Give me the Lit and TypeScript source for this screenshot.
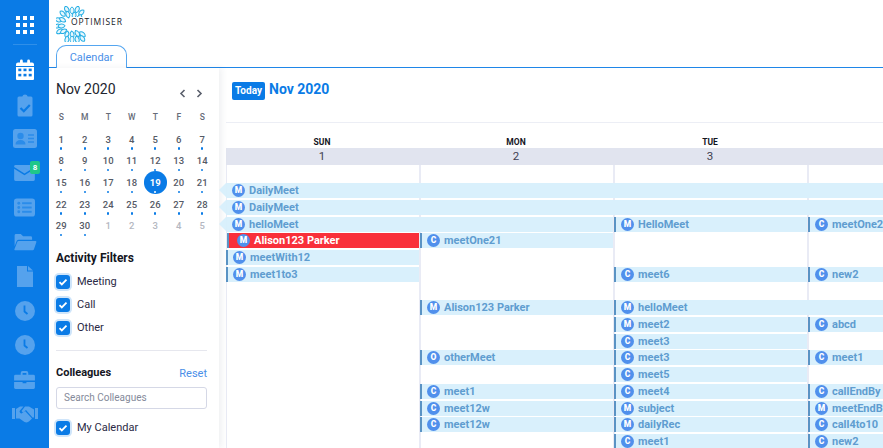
import { LitElement, html, css, svg } from "lit";
import { customElement } from "lit/decorators.js";

type Ev = { r: number; c: number; s?: number; k: string; t: string; cont?: boolean; red?: boolean };

const EVENTS: Ev[] = [
  { r: 0, c: 0, s: 4, k: "M", t: "DailyMeet", cont: true },
  { r: 1, c: 0, s: 4, k: "M", t: "DailyMeet", cont: true },
  { r: 2, c: 0, s: 2, k: "M", t: "helloMeet", cont: true },
  { r: 2, c: 2, k: "M", t: "HelloMeet" },
  { r: 2, c: 3, k: "C", t: "meetOne2" },
  { r: 3, c: 0, k: "M", t: "Alison123 Parker", red: true },
  { r: 3, c: 1, k: "C", t: "meetOne21" },
  { r: 4, c: 0, k: "M", t: "meetWith12" },
  { r: 5, c: 0, k: "M", t: "meet1to3" },
  { r: 5, c: 2, k: "C", t: "meet6" },
  { r: 5, c: 3, k: "C", t: "new2" },
  { r: 7, c: 1, k: "M", t: "Alison123 Parker" },
  { r: 7, c: 2, s: 2, k: "M", t: "helloMeet" },
  { r: 8, c: 2, k: "M", t: "meet2" },
  { r: 8, c: 3, k: "C", t: "abcd" },
  { r: 9, c: 2, k: "C", t: "meet3" },
  { r: 10, c: 1, k: "O", t: "otherMeet" },
  { r: 10, c: 2, k: "C", t: "meet3" },
  { r: 10, c: 3, k: "C", t: "meet1" },
  { r: 11, c: 2, k: "C", t: "meet5" },
  { r: 12, c: 1, k: "C", t: "meet1" },
  { r: 12, c: 2, k: "C", t: "meet4" },
  { r: 12, c: 3, k: "C", t: "callEndBy" },
  { r: 13, c: 1, k: "C", t: "meet12w" },
  { r: 13, c: 2, k: "M", t: "subject" },
  { r: 13, c: 3, k: "M", t: "meetEndBy" },
  { r: 14, c: 1, k: "C", t: "meet12w" },
  { r: 14, c: 2, k: "M", t: "dailyRec" },
  { r: 14, c: 3, k: "C", t: "call4to10" },
  { r: 15, c: 2, k: "C", t: "meet1" },
  { r: 15, c: 3, k: "C", t: "new2" },
];

const BLUE = "#0a7be6";
const DIM = "#55a2ed";
const CUT = "#2a8cea";

const navIcons = [
  svg`<svg width="24" height="24" viewBox="0 0 24 24"><path fill="#fff" d="M3 6.500a2 2 0 0 1 2-2h2V3a1.400 1.400 0 0 1 2.800 0v1.500h4.400V3A1.400 1.400 0 0 1 17 3v1.500h2a2 2 0 0 1 2 2V8H3zM3 9h18v12a1 1 0 0 1-1 1H4a1 1 0 0 1-1-1z"/><g fill="${BLUE}"><rect x="5.300" y="10.600" width="3" height="2.600"/><rect x="10.500" y="10.600" width="3" height="2.600"/><rect x="15.700" y="10.600" width="3" height="2.600"/><rect x="5.300" y="15.800" width="3" height="2.600"/><rect x="10.500" y="15.800" width="3" height="2.600"/><rect x="15.700" y="15.800" width="3" height="2.600"/></g></svg>`,
  svg`<svg width="24" height="24" viewBox="0 0 24 24"><path fill="${DIM}" d="M6 3.500h3.300a2.800 2.800 0 0 1 5.400 0H18a1.500 1.500 0 0 1 1.500 1.500v17a1.500 1.500 0 0 1-1.500 1.500H6A1.500 1.500 0 0 1 4.500 22V5A1.500 1.500 0 0 1 6 3.500z"/><path fill="none" stroke="${BLUE}" stroke-width="2.200" d="M7.500 15l3.300 3.300 6-6.300"/></svg>`,
  svg`<svg width="24" height="19" viewBox="0 0 24 19"><rect width="24" height="19" rx="2.500" fill="${DIM}"/><circle cx="7.500" cy="7" r="3.200" fill="${CUT}"/><path fill="${CUT}" d="M2.500 15.500c0-3 2-4.500 5-4.500s5 1.500 5 4.500z"/><path stroke="${CUT}" stroke-width="1.500" d="M15 6h6M15 9.500h6M15 13h6"/></svg>`,
  svg`<svg width="21" height="16" viewBox="0 0 22 17"><path fill="${DIM}" d="M1.500 0h19A1.500 1.500 0 0 1 22 1.500V2L11 9 0 2v-.5A1.500 1.500 0 0 1 1.500 0zM0 4l11 7 11-7v11.500a1.500 1.500 0 0 1-1.500 1.500h-19A1.500 1.500 0 0 1 0 15.500z"/></svg>`,
  svg`<svg width="21" height="19" viewBox="0 0 22 19"><rect width="22" height="19" rx="3" fill="${DIM}"/><g fill="${CUT}"><circle cx="5" cy="5" r="1.500"/><circle cx="5" cy="9.500" r="1.500"/><circle cx="5" cy="14" r="1.500"/><rect x="8.500" y="4" width="10" height="2"/><rect x="8.500" y="8.500" width="10" height="2"/><rect x="8.500" y="13" width="10" height="2"/></g></svg>`,
  svg`<svg width="24" height="17" viewBox="0 0 24 18"><path fill="${DIM}" d="M1 1.500A1.500 1.500 0 0 1 2.500 0h5l2.500 2.500h8A1.500 1.500 0 0 1 19.500 4v2H5.500a2.500 2.500 0 0 0-2.300 1.500L1 13z"/><path fill="${DIM}" d="M5.200 7.500H23a1 1 0 0 1 1 1.300l-2.500 7.400a1.500 1.500 0 0 1-1.400 1H1.500a.8.8 0 0 1-.7-1.100l3-7.500a1.500 1.500 0 0 1 1.400-1.100z"/></svg>`,
  svg`<svg width="16" height="21" viewBox="0 0 16 21"><path fill="${DIM}" d="M0 0h10v5.500h6V21H0z"/><path fill="${DIM}" d="M11 0l5 4.500h-5z"/></svg>`,
  svg`<svg width="20" height="20" viewBox="0 0 20 20"><circle cx="10" cy="10" r="10" fill="${DIM}"/><path fill="none" stroke="${BLUE}" stroke-width="1.800" d="M9.500 4.500V10.500l3 2.500"/></svg>`,
  svg`<svg width="20" height="20" viewBox="0 0 20 20"><circle cx="10" cy="10" r="10" fill="${DIM}"/><path fill="none" stroke="${BLUE}" stroke-width="1.800" d="M9.500 4.500V10.500l3 2.500"/></svg>`,
  svg`<svg width="21" height="18" viewBox="0 0 22 19"><path fill="${DIM}" d="M7 4V2a2 2 0 0 1 2-2h4a2 2 0 0 1 2 2v2h5.500A1.500 1.500 0 0 1 22 5.500V10H0V5.500A1.500 1.500 0 0 1 1.500 4zm2-2v2h4V2zM0 11.500h9V13h4v-1.500h9v6A1.500 1.500 0 0 1 20.500 19h-19A1.500 1.500 0 0 1 0 17.500z"/></svg>`,
  svg`<svg width="26" height="18" viewBox="0 0 26 18"><g fill="${DIM}"><path d="M0 3h3v11H0zM23 3h3v11h-3z"/><path d="M4 4l4-2.500h3.500L8 5.500a1.700 1.700 0 0 0 2.500 2.300L13 6l7 7.500-1.500 1.500-1 1-1.500 1-1.500.5-2-.5-5-3.500H4z"/><path d="M13 1.500h4l5 3v8h-1.500L14 5l-3 2.500-1.500-1.500z"/></g></svg>`,
];

const petals: [number, number, number][] = [
  [11, 4, -25], [16, 5, 0], [21, 4, 20], [25, 7, 45], [7, 8, -45], [12, 9, -15], [18, 10, 10], [23, 12, 35],
  [3, 14, -75], [7, 14, -60], [2, 20, -100], [6, 20, -95], [4, 25, -125], [8, 25, -120],
  [11, 28, -165], [16, 28, 170], [21, 27, 150], [26, 28, 130], [11, 33, -170], [16, 33, 180], [21, 33, 165], [26, 32, 145],
];

const logo = svg`<svg class="logo-mark" width="30" height="36" viewBox="0 0 30 36">${petals.map(
  ([x, y, a]) => svg`<g transform="translate(${x} ${y}) rotate(${a})"><path d="M0-4C2.500-2.800 2.700 1.300 0 3-2.700 1.300-2.500-2.800 0-4z" fill="#e6f7fd" stroke="#22ade4" stroke-width="1"/></g>`
)}</svg>`;

const check = html`<svg width="10" height="10" viewBox="0 0 10 10"><path d="M1.500 5.200l2.300 2.300 4.700-4.800" fill="none" stroke="#fff" stroke-width="1.800"/></svg>`;

const calDays: { d: number; out?: boolean; today?: boolean }[] = [
  ...Array.from({ length: 30 }, (_, i) => ({ d: i + 1, today: i + 1 === 19 })),
  ...[1, 2, 3, 4, 5].map((d) => ({ d, out: true })),
];

@customElement("app-root")
export class AppRoot extends LitElement {
  static styles = css`
    :host {
      display: flex;
      width: 883px;
      height: 448px;
      overflow: hidden;
      background: #fff;
      font-family: Roboto, "Liberation Sans", sans-serif;
      color: #1d2130;
    }
    .nav {
      width: 49px;
      flex: none;
      background: #0a7be6;
      display: flex;
      flex-direction: column;
      align-items: center;
      padding-top: 16px;
      box-sizing: border-box;
    }
    .apps {
      display: grid;
      grid-template-columns: repeat(3, 4px);
      gap: 3px;
    }
    .apps i { width: 4px; height: 4px; background: #fff; display: block; }
    .nav hr {
      width: 24px;
      border: none;
      border-top: 1px solid #2f8fe9;
      margin: 10px 0 8px;
    }
    .nav-item {
      height: 34.400px;
      flex: none;
      display: flex;
      align-items: center;
      justify-content: center;
      position: relative;
      width: 100%;
    }
    .badge {
      position: absolute;
      left: 30px;
      top: 5px;
      width: 10px;
      height: 13px;
      background: #1fc78a;
      border-radius: 2px;
      color: #fff;
      font-size: 8px;
      font-weight: 700;
      line-height: 13px;
      text-align: center;
    }
    .content { flex: 1; min-width: 0; display: flex; flex-direction: column; }
    .brand {
      height: 45px;
      flex: none;
      display: flex;
      align-items: center;
      padding: 0 0 0 7px;
      box-sizing: border-box;
    }
    .logo-mark { display: block; margin-top: 2px; }
    .brand span {
      font-family: "Open Sans", Roboto, sans-serif;
      font-size: 8.500px;
      letter-spacing: 0.950px;
      color: #15181e;
      font-weight: 400;
      margin-left: -16px;
      margin-top: -1px;
      background: #fff;
      padding-left: 1px;
      line-height: 10px;
    }
    .tabs {
      height: 23px;
      flex: none;
      border-bottom: 1px solid #1f86e8;
      box-sizing: border-box;
      padding-left: 7px;
      display: flex;
    }
    .tab {
      width: 71px;
      height: 23px;
      box-sizing: border-box;
      border: 1px solid #55a6f0;
      border-bottom: none;
      border-radius: 10px 10px 0 0;
      background: #fff;
      color: #4a8fe8;
      font-size: 11px;
      line-height: 23px;
      text-align: center;
    }
    .body { flex: 1; min-height: 0; display: flex; }
    .panel {
      width: 170px;
      flex: none;
      background: #fff;
      box-shadow: 3px 0 6px rgba(40, 50, 90, 0.07);
      position: relative;
      z-index: 1;
      padding-top: 11px;
      box-sizing: border-box;
    }
    .mini-head {
      display: flex;
      align-items: center;
      padding: 0 16px 0 7px;
      height: 20px;
      font-size: 14px;
      color: #22252f;
    }
    .mini-head b { font-weight: 400; flex: 1; }
    .mini-head svg { margin-left: 8px; margin-top: 8px; display: block; }
    .mini {
      display: grid;
      grid-template-columns: repeat(7, 23.500px);
      grid-auto-rows: 21.700px;
      margin-left: 0.500px;
      margin-top: 9px;
    }
    .dow {
      font-size: 8.500px;
      font-weight: 500;
      color: #666b78;
      text-align: center;
      line-height: 18px;
      height: 18px;
    }
    .day {
      position: relative;
      text-align: center;
      font-size: 9.500px;
      font-weight: 500;
      color: #555a66;
      line-height: 13px;
      top: 3px;
    }
    .day.out { color: #b4b7c1; }
    .day::after {
      content: "";
      position: absolute;
      left: 50%;
      top: 14.500px;
      width: 2.400px;
      height: 2.400px;
      margin-left: -1.200px;
      border-radius: 50%;
      background: #0a7be6;
    }
    .day.out::after { display: none; }
    .day.today { color: #fff; font-weight: 700; z-index: 0; }
    .day.today::before {
      content: "";
      position: absolute;
      left: 0;
      top: -5px;
      width: 23.500px;
      height: 22.500px;
      border-radius: 50%;
      background: #0a7be6;
      z-index: -1;
    }
    .day.today::after { background: #fff; }
    .sec { padding: 0 12px 0 7px; }
    .sec-title {
      font-size: 11px;
      font-weight: 700;
      color: #14161e;
      line-height: 14px;
    }
    .filters { margin-top: 13px; }
    .filters .sec-title { font-size: 12px; }
    .check {
      display: flex;
      align-items: center;
      height: 23px;
      font-size: 11px;
      color: #2b2a45;
    }
    .box {
      width: 14px;
      height: 14px;
      border-radius: 3px;
      background: #0a7be6;
      box-shadow: 0 0 0 2px #cfe5fa;
      display: flex;
      align-items: center;
      justify-content: center;
      margin-right: 7px;
    }
    .title-gap { height: 5px; }
    .sep { height: 1px; background: #e6e7ee; margin: 11px 12px 15px 7px; }
    .coll-head { display: flex; justify-content: space-between; align-items: center; }
    .reset { font-size: 11px; color: #4a8fe8; }
    .search {
      width: 151px;
      height: 22px;
      margin-top: 7px;
      box-sizing: border-box;
      border: 1px solid #d5d8e6;
      border-radius: 3px;
      padding: 0 7px;
      font-size: 10px;
      color: #858a9a;
      line-height: 20px;
    }
    .mycal { margin-top: 7px; }
    .main { flex: 1; min-width: 0; padding-left: 7px; overflow: hidden; }
    .toolbar {
      height: 55px;
      box-sizing: border-box;
      border-bottom: 1px solid #eceef5;
      padding: 14px 0 0 6px;
      display: flex;
      align-items: flex-start;
      gap: 4px;
    }
    .today-btn {
      width: 33px;
      height: 18px;
      background: #0a7be6;
      border-radius: 2px;
      color: #fff;
      font-size: 10px;
      font-weight: 700;
      line-height: 18px;
      text-align: center;
    }
    .title {
      font-size: 14px;
      font-weight: 700;
      color: #0a7be6;
      line-height: 14px;
    }
    .dows, .nums {
      display: grid;
      grid-template-columns: repeat(4, 194px);
      width: 776px;
    }
    .dows > div, .nums > div { padding-right: 2px; }
    .dows {
      height: 25px;
      box-sizing: border-box;
      padding-top: 13px;
      font-size: 8.500px;
      font-weight: 700;
      color: #14161e;
      text-align: center;
      line-height: 12px;
    }
    .nums {
      height: 17px;
      background: #e1e4ef;
      font-size: 11.500px;
      color: #3f4050;
      text-align: center;
      line-height: 17px;
      overflow: hidden;
    }
    .grid {
      display: grid;
      grid-template-columns: repeat(4, 194px);
      grid-auto-rows: 16.720px;
      padding-top: 18.200px;
      height: 400px;
      width: 776px;
      background-image: repeating-linear-gradient(
        to right,
        #e9ebf5 0,
        #e9ebf5 1px,
        transparent 1px,
        transparent 193px,
        #e9ebf5 193px,
        #e9ebf5 194px
      );
    }
    .ev {
      height: 15px;
      margin-right: 1px;
      background: #d9f0fc;
      border-left: 2px solid #5a93c4;
      box-sizing: border-box;
      padding-left: 5px;
      display: flex;
      align-items: center;
      gap: 4px;
      font-size: 11px;
      font-weight: 700;
      color: #5f9dd0;
      position: relative;
      white-space: nowrap;
    }
    .ev .k {
      width: 13px;
      height: 13px;
      border-radius: 50%;
      background: #5090ec;
      color: #fff;
      font-size: 8.500px;
      font-weight: 900;
      line-height: 13px;
      text-align: center;
      flex: none;
    }
    .ev.cont { border-left: none; padding-left: 6px; }
    .ev.cont::before {
      content: "";
      position: absolute;
      left: -7px;
      top: 0;
      border-style: solid;
      border-width: 7.500px 7px 7.500px 0;
      border-color: transparent #d9f0fc transparent transparent;
      z-index: 2;
    }
    .ev.red {
      background: #f9303a;
      color: #fff;
      margin: 0 1px 0 1px;
      padding-left: 8px;
      border-left-color: #5a93c4;
    }
  `;

  render() {
    return html`
      <nav class="nav">
        <div class="apps">${Array.from({ length: 9 }, () => html`<i></i>`)}</div>
        <hr />
        ${navIcons.map(
          (ic, i) => html`<div class="nav-item">${ic}${i === 3 ? html`<span class="badge">8</span>` : ""}</div>`
        )}
      </nav>
      <div class="content">
        <div class="brand">${logo}<span>OPTIMISER</span></div>
        <div class="tabs"><div class="tab">Calendar</div></div>
        <div class="body">
          <aside class="panel">
            <div class="mini-head">
              <b>Nov 2020</b>
              <svg width="8" height="9" viewBox="0 0 8 9"><path d="M5.500 1L2 4.500 5.500 8" fill="none" stroke="#5a5f6c" stroke-width="1.600"/></svg>
              <svg width="8" height="9" viewBox="0 0 8 9"><path d="M2.500 1L6 4.500 2.500 8" fill="none" stroke="#5a5f6c" stroke-width="1.600"/></svg>
            </div>
            <div class="mini">
              ${["S", "M", "T", "W", "T", "F", "S"].map((d) => html`<div class="dow">${d}</div>`)}
              ${calDays.map(
                (c) => html`<div class="day ${c.out ? "out" : ""} ${c.today ? "today" : ""}">${c.d}</div>`
              )}
            </div>
            <div class="sec filters">
              <div class="sec-title">Activity Filters</div>
              <div class="title-gap"></div>
              ${["Meeting", "Call", "Other"].map(
                (l) => html`<div class="check"><span class="box">${check}</span>${l}</div>`
              )}
            </div>
            <div class="sep"></div>
            <div class="sec">
              <div class="coll-head">
                <span class="sec-title">Colleagues</span><span class="reset">Reset</span>
              </div>
              <div class="search">Search Colleagues</div>
              <div class="check mycal"><span class="box">${check}</span>My Calendar</div>
            </div>
          </aside>
          <section class="main">
            <div class="toolbar">
              <div class="today-btn">Today</div>
              <div class="title">Nov 2020</div>
            </div>
            <div class="dows"><div>SUN</div><div>MON</div><div>TUE</div><div></div></div>
            <div class="nums"><div>1</div><div>2</div><div>3</div><div></div></div>
            <div class="grid">
              ${EVENTS.map(
                (e) => html`<div
                  class="ev ${e.cont ? "cont" : ""} ${e.red ? "red" : ""}"
                  style="grid-row:${e.r + 1};grid-column:${e.c + 1} / span ${e.s ?? 1}"
                >
                  <span class="k">${e.k}</span><span>${e.t}</span>
                </div>`
              )}
            </div>
          </section>
        </div>
      </div>
    `;
  }
}
